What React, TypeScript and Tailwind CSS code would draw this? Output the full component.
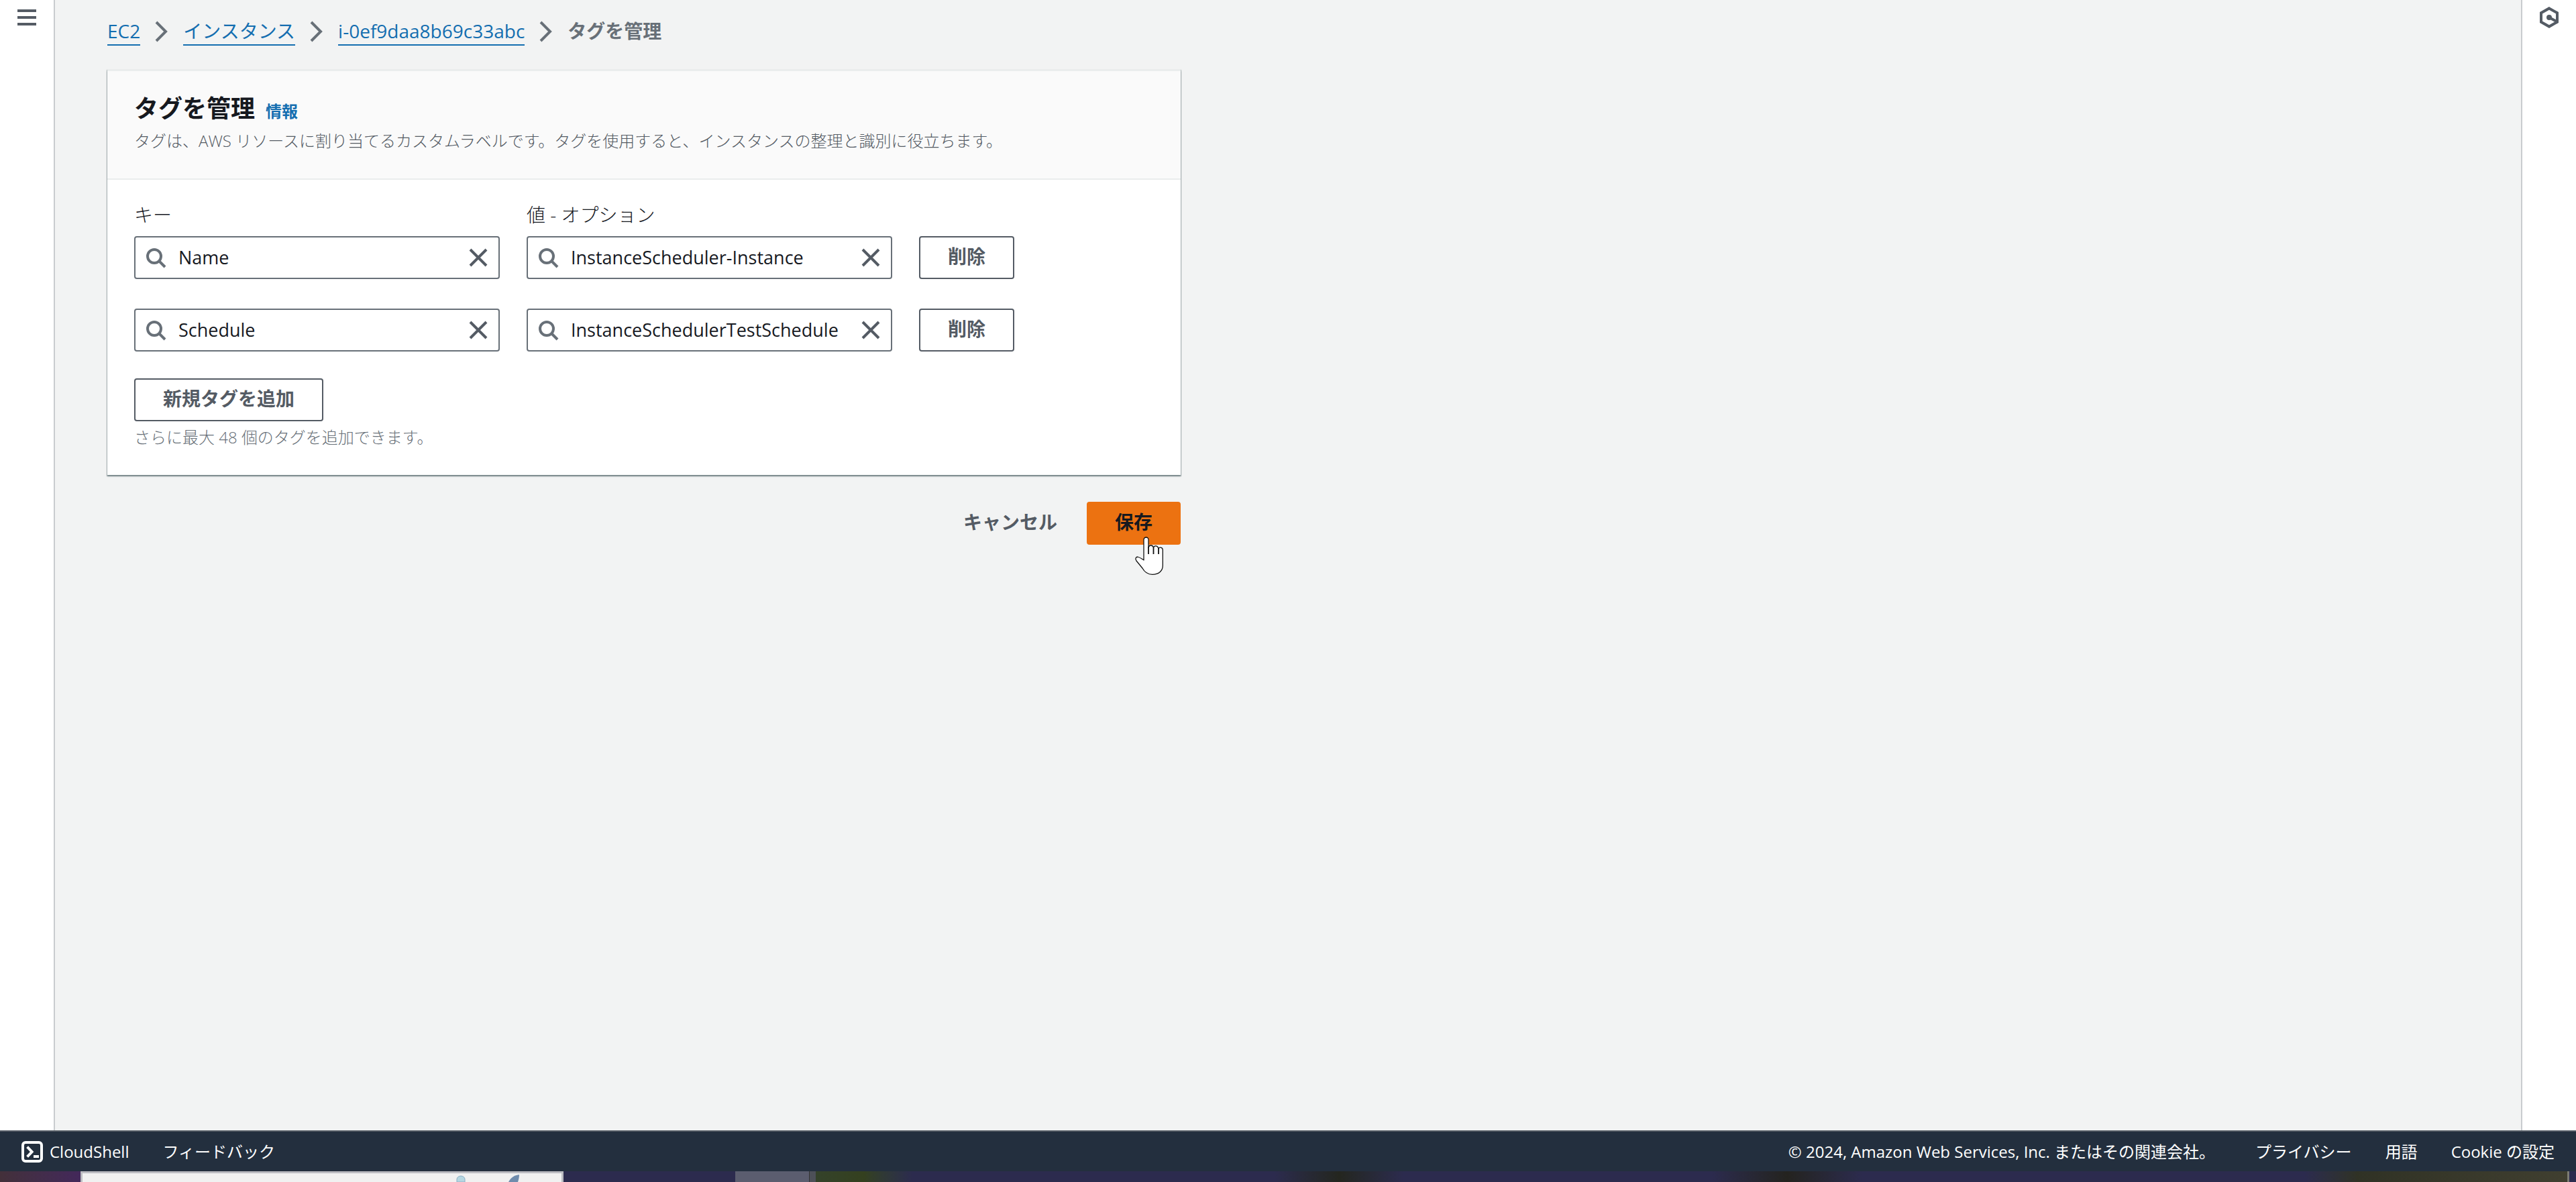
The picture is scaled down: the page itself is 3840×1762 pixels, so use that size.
import { useState } from "react";
import type { ReactNode } from "react";

const CRUMBS = ["EC2", "インスタンス", "i-0ef9daa8b69c33abc"];

const INITIAL_TAGS = [
  { id: 1, key: "Name", value: "InstanceScheduler-Instance" },
  { id: 2, key: "Schedule", value: "InstanceSchedulerTestSchedule" },
];

const MAX_TAGS = 50;

function Icon({ children, className = "" }: { children: ReactNode; className?: string }) {
  return (
    <svg
      viewBox="0 0 16 16"
      fill="none"
      stroke="currentColor"
      strokeWidth="2"
      className={`size-8 shrink-0 ${className}`}
      aria-hidden
    >
      {children}
    </svg>
  );
}

function SearchField({
  id,
  label,
  value,
  onChange,
}: {
  id: string;
  label: string;
  value: string;
  onChange: (value: string) => void;
}) {
  return (
    <div className="flex h-16 min-w-0 items-center rounded-sm border-2 border-[#687078] bg-white px-3.5">
      <Icon className="text-[#687078]">
        <circle cx="7" cy="7" r="5" />
        <path d="M10.5 10.5 15 15" />
      </Icon>
      <input
        id={id}
        type="text"
        aria-label={label}
        value={value}
        onChange={(e) => onChange(e.target.value)}
        className="ml-[18px] min-w-0 flex-1 bg-transparent text-[27px] leading-9 text-[#16191f] outline-none"
      />
      <button type="button" aria-label={`${label}をクリア`} className="text-[#545b64]" onClick={() => onChange("")}>
        <Icon>
          <path d="m2 2 12 12M14 2 2 14" />
        </Icon>
      </button>
    </div>
  );
}

function OutlineButton({ children, onClick }: { children: ReactNode; onClick: () => void }) {
  return (
    <button
      type="button"
      onClick={onClick}
      className="h-16 rounded-sm border-2 border-[#545b64] bg-white px-[41px] pb-1 text-[28px] leading-9 font-bold text-[#545b64]"
    >
      {children}
    </button>
  );
}

function Breadcrumbs() {
  return (
    <nav aria-label="パンくずリスト">
      <ol className="flex items-center text-[28px] leading-10">
        {CRUMBS.map((c) => (
          <li key={c} className="flex items-center">
            <a href="#" className="border-b-2 border-[#146eb0] text-[#146eb0]">
              {c}
            </a>
            <Icon className="mx-4 text-[#687078]">
              <path d="m4 1 7 7-7 7" />
            </Icon>
          </li>
        ))}
        <li className="border-b-2 border-transparent font-bold text-[#687078]" aria-current="page">
          タグを管理
        </li>
      </ol>
    </nav>
  );
}

function PointerCursor() {
  return (
    <svg
      viewBox="0 0 42 57"
      className="pointer-events-none absolute top-[52px] left-[72px] h-[57px] w-[42px]"
      fill="#fff"
      stroke="#111"
      strokeWidth="1.3"
      strokeLinejoin="round"
      aria-hidden
    >
      <path d="M13 35V4.500a3.500 3.500 0 0 1 7 0V16c1-4 6-4 7.500 0 1.500-3 6-3 7.500 1.500 2-2.500 6.300-1.500 6.300 2.500V43c0 8-6 13.300-15.500 13.300C18 56.300 14 52.500 11 47L2 36C-.5 32 2 29.500 5 30.500c3.500 1 5.500 3 8 4.500Z" />
      <path d="M20 15v11M27.500 16v10M35 17v9" strokeWidth="1.800" />
    </svg>
  );
}

function TagCard() {
  const [tags, setTags] = useState(INITIAL_TAGS);

  const update = (id: number, patch: { key?: string; value?: string }) =>
    setTags(tags.map((t) => (t.id === id ? { ...t, ...patch } : t)));

  return (
    <section className="bg-white shadow-[0_1px_1px_1px_rgba(0,28,36,0.2),0_2px_2px_0_rgba(0,28,36,0.4)]">
      <header className="border-t-2 border-b-2 border-[#eaeded] bg-[#fafafa] px-10 pt-8 pb-10">
        <h1 className="flex items-baseline gap-4 text-4xl leading-12 font-bold text-[#16191f]">
          タグを管理
          <a href="#" className="text-2xl leading-8 text-[#146eb0]">
            情報
          </a>
        </h1>
        <p className="mt-2 text-2xl leading-8 font-light text-[#545b64]">
          タグは、AWS リソースに割り当てるカスタムラベルです。タグを使用すると、インスタンスの整理と識別に役立ちます。
        </p>
      </header>

      <div className="px-10 pt-8 pb-10">
        <div className="grid grid-cols-[545fr_545fr_350fr] gap-x-10 text-[28px] leading-10 font-light text-[#16191f]">
          <label htmlFor="key-1">キー</label>
          <label htmlFor="value-1">値 - オプション</label>
        </div>
        <div className="mt-3 flex flex-col gap-11">
          {tags.map((t) => (
            <div key={t.id} className="grid grid-cols-[545fr_545fr_350fr] gap-x-10">
              <SearchField
                id={`key-${t.id}`}
                label="キー"
                value={t.key}
                onChange={(key) => update(t.id, { key })}
              />
              <SearchField
                id={`value-${t.id}`}
                label="値"
                value={t.value}
                onChange={(value) => update(t.id, { value })}
              />
              <div>
                <OutlineButton onClick={() => setTags(tags.filter((x) => x.id !== t.id))}>削除</OutlineButton>
              </div>
            </div>
          ))}
        </div>
        <div className="mt-10">
          <OutlineButton onClick={() => setTags([...tags, { id: Date.now(), key: "", value: "" }])}>
            新規タグを追加
          </OutlineButton>
        </div>
        <p className="mt-2 text-2xl leading-8 font-light text-[#687078]">
          さらに最大 {MAX_TAGS - tags.length} 個のタグを追加できます。
        </p>
      </div>
    </section>
  );
}

function ConsoleFooter() {
  return (
    <footer className="flex h-[61px] items-center border-t-2 border-[#545b64] bg-[#232f3e] px-8 text-2xl leading-8 text-white">
      <button type="button" className="flex items-center gap-2.5">
        <Icon>
          <rect x="1" y="1" width="14" height="14" rx="2" />
          <path d="m4.300 4.300 3.500 3.700-3.500 3.700M9 11.500h4" />
        </Icon>
        CloudShell
      </button>
      <a href="#" className="ml-[50px]">
        フィードバック
      </a>
      <div className="ml-auto flex">
        <span>© 2024, Amazon Web Services, Inc. またはその関連会社。</span>
        <nav className="ml-[60px] flex gap-[50px]">
          <a href="#">プライバシー</a>
          <a href="#">用語</a>
          <a href="#">Cookie の設定</a>
        </nav>
      </div>
    </footer>
  );
}

// Sliver of the desktop taskbar below the browser window
function TaskbarEdge() {
  return (
    <div className="flex h-4 overflow-hidden bg-[#2c2b4e]" aria-hidden>
      <div className="w-[120px] bg-linear-to-r from-[#43303a] to-[#43285a]" />
      <div className="flex w-[720px] justify-end border-3 border-b-0 border-[#bcbcc2] bg-[#f1f1f1]">
        <svg viewBox="0 0 160 13" className="h-[13px] w-40">
          <path d="M4 13V9a6 5 0 0 1 12 0v4Z" fill="#b5d7e2" stroke="#8badc4" />
          <path d="M81 13c3-6 8-10 16-11 0 4-1 8-2 11Z" fill="#6f8cad" />
        </svg>
      </div>
      <div className="w-64" />
      <div className="w-[110px] bg-[#5b5d6f]" />
      <div className="w-2.5 border-l border-[#333] bg-[#4d5058]" />
      <div className="w-36 bg-linear-to-r from-[#34422a] via-[#34401f] to-[#2c2b4e]" />
      <div className="w-[540px]" />
      <div className="w-48 bg-linear-to-r from-[#2c2b4e] via-[#24261f] to-[#2c2b4e]" />
      <div className="w-[460px]" />
      <div className="w-56 bg-linear-to-r from-[#2c2b4e] via-[#24231f] to-[#2c2b4e]" />
      <div className="w-[660px]" />
      <div className="flex-1 bg-linear-to-r from-[#2c2b4e] via-[#303225] via-20% to-[#403f30]" />
      <div className="mr-2.5 w-[3px] bg-[#7c7c74]" />
    </div>
  );
}

export default function App() {
  return (
    <div className="flex min-h-screen flex-col bg-[#f2f3f3] font-['Open_Sans','Noto_Sans_CJK_JP',sans-serif]">
      <div className="flex flex-1">
        <aside className="flex w-[82px] shrink-0 items-start justify-center border-r-2 border-[#c9cccf] bg-white pt-2.5">
          <button type="button" aria-label="ナビゲーションを開く" className="text-[#545b64]">
            <Icon>
              <path d="M1 3h14M1 8h14M1 13h14" />
            </Icon>
          </button>
        </aside>

        <main className="min-w-0 flex-1 px-[78px] pt-[26px]">
          <div className="max-w-[1600px]">
            <Breadcrumbs />
            <div className="mt-9">
              <TagCard />
            </div>
            <div className="mt-10 flex justify-end gap-1">
              <button type="button" className="h-16 px-10 pb-1 text-[28px] leading-9 font-bold text-[#545b64]">
                キャンセル
              </button>
              <div className="relative">
                <button
                  type="button"
                  className="h-16 rounded-sm border-2 border-[#ec7211] bg-[#ec7211] px-10 pb-1 text-[28px] leading-9 font-bold text-[#16191f]"
                >
                  保存
                </button>
                <PointerCursor />
              </div>
            </div>
          </div>
        </main>

        <aside className="flex w-[82px] shrink-0 items-start justify-center border-l-2 border-[#c9cccf] bg-white pt-2.5">
          <button type="button" aria-label="Amazon Q" className="text-[#545b64]">
            <Icon>
              <path d="M8 1.200 14 4.600v6.800L8 14.800 2 11.400V4.600Z" />
              <circle cx="8" cy="8" r="1.200" fill="currentColor" strokeWidth="1.600" />
              <path d="m8 8 5.500 3" />
            </Icon>
          </button>
        </aside>
      </div>
      <ConsoleFooter />
      <TaskbarEdge />
    </div>
  );
}
